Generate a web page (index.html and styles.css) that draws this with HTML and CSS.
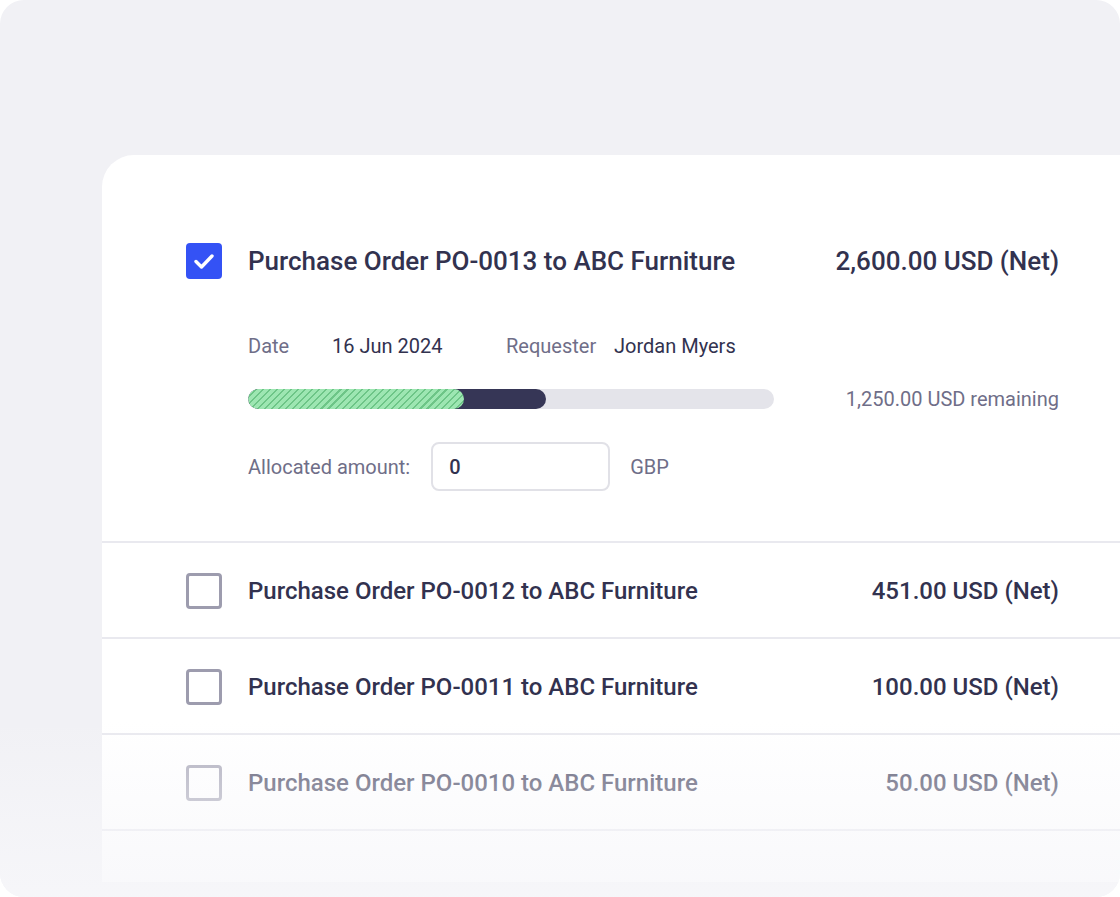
FILE: index.html
```html
<!DOCTYPE html>
<html>
<head>
<meta charset="utf-8">
<link rel="stylesheet" href="styles.css">
</head>
<body>
<div class="frame">
  <div class="card">
    <div class="row row-open">
      <div class="row-head">
        <span class="check check-on">
          <svg viewBox="0 0 36 36" width="36" height="36"><path d="M10 18.5 L15.5 24 L26 13" fill="none" stroke="#fff" stroke-width="3.4" stroke-linecap="round" stroke-linejoin="round"/></svg>
        </span>
        <span class="title">Purchase Order PO-0013 to ABC Furniture</span>
        <span class="amount">2,600.00 USD (Net)</span>
      </div>
      <div class="details">
        <div class="meta">
          <span class="lbl lbl-date">Date</span>
          <span class="val val-date">16 Jun 2024</span>
          <span class="lbl lbl-req">Requester</span>
          <span class="val">Jordan Myers</span>
        </div>
        <div class="progress-row">
          <div class="bar">
            <div class="bar-dark" style="width:298px"></div>
            <div class="bar-green" style="width:216px"></div>
          </div>
          <span class="remaining">1,250.00 USD remaining</span>
        </div>
        <div class="alloc">
          <span class="lbl">Allocated amount:</span>
          <div class="input">0</div>
          <span class="cur">GBP</span>
        </div>
      </div>
    </div>
    <div class="row">
      <div class="row-head">
        <span class="check"></span>
        <span class="title">Purchase Order PO-0012 to ABC Furniture</span>
        <span class="amount">451.00 USD (Net)</span>
      </div>
    </div>
    <div class="row">
      <div class="row-head">
        <span class="check"></span>
        <span class="title">Purchase Order PO-0011 to ABC Furniture</span>
        <span class="amount">100.00 USD (Net)</span>
      </div>
    </div>
    <div class="row row-faded">
      <div class="row-head">
        <span class="check"></span>
        <span class="title">Purchase Order PO-0010 to ABC Furniture</span>
        <span class="amount">50.00 USD (Net)</span>
      </div>
    </div>
    <div class="row row-last"></div>
  </div>
  <div class="fade"></div>
</div>
</body>
</html>
```

FILE: styles.css
```css
html, body {
  margin: 0;
  padding: 0;
  background: #ffffff;
  font-family: Roboto, "Liberation Sans", Arial, sans-serif;
}

.frame {
  position: relative;
  width: 1120px;
  height: 897px;
  box-sizing: border-box;
  padding: 155px 0 15px 102px;
  background: #f1f1f5;
  border-radius: 24px;
  overflow: hidden;
  display: flex;
}

.card {
  flex: 1;
  background: #ffffff;
  border-top-left-radius: 32px;
  display: flex;
  flex-direction: column;
}

.row {
  border-bottom: 2px solid #e9e9ef;
  padding: 30px 61px 28px 84px;
}

.row-open {
  padding-top: 88px;
  padding-bottom: 50px;
}

.row-last {
  flex: 1;
  border-bottom: none;
}

.row-head {
  display: flex;
  align-items: center;
  height: 36px;
}

.check {
  width: 36px;
  height: 36px;
  box-sizing: border-box;
  border: 3px solid #9d9cae;
  border-radius: 4px;
  flex: none;
}

.check-on {
  border: none;
  background: #3452f5;
}

.check-on svg {
  display: block;
}

.title {
  margin-left: 26px;
  font-size: 24px;
  font-weight: 500;
  color: #32324f;
  flex: 1;
  white-space: nowrap;
}

.amount {
  font-size: 24px;
  font-weight: 500;
  color: #32324f;
  white-space: nowrap;
}

.row-open .title,
.row-open .amount {
  font-size: 26px;
}

.details {
  padding-left: 62px;
}

.meta {
  display: flex;
  align-items: center;
  height: 24px;
  margin-top: 55px;
}

.lbl {
  color: #6f6e88;
  font-size: 20px;
  white-space: nowrap;
}

.val {
  color: #32324f;
  font-size: 20px;
  white-space: nowrap;
}

.lbl-date { width: 84px; }
.val-date { width: 174px; }
.lbl-req { width: 108px; }

.progress-row {
  display: flex;
  align-items: center;
  height: 20px;
  margin-top: 31px;
}

.bar {
  position: relative;
  width: 526px;
  height: 20px;
  border-radius: 10px;
  background: #e4e4ea;
  overflow: hidden;
  flex: none;
}

.bar-dark,
.bar-green {
  position: absolute;
  left: 0;
  top: 0;
  height: 20px;
  border-radius: 10px;
}

.bar-dark {
  background: #363656;
}

.bar-green {
  background-color: #9de6b2;
  background-image: repeating-linear-gradient(135deg, rgba(70,170,100,0.55) 0 1.5px, transparent 1.5px 5px);
}

.remaining {
  margin-left: auto;
  font-size: 20px;
  color: #6f6e88;
  white-space: nowrap;
}

.alloc {
  display: flex;
  align-items: center;
  height: 49px;
  margin-top: 33px;
}

.input {
  margin-left: 21px;
  width: 179px;
  height: 49px;
  box-sizing: border-box;
  border: 2px solid #e1e1e7;
  border-radius: 8px;
  padding-left: 16px;
  display: flex;
  align-items: center;
  font-size: 20px;
  font-weight: 500;
  color: #32324f;
  flex: none;
}

.cur {
  margin-left: 20px;
  font-size: 20px;
  color: #6f6e88;
}

.row-faded .row-head {
  opacity: 0.8;
}

.fade {
  position: absolute;
  left: 0;
  right: 0;
  top: 720px;
  bottom: 0;
  background: linear-gradient(to bottom, rgba(247,247,250,0), rgba(247,247,250,0.85));
  pointer-events: none;
}
```
